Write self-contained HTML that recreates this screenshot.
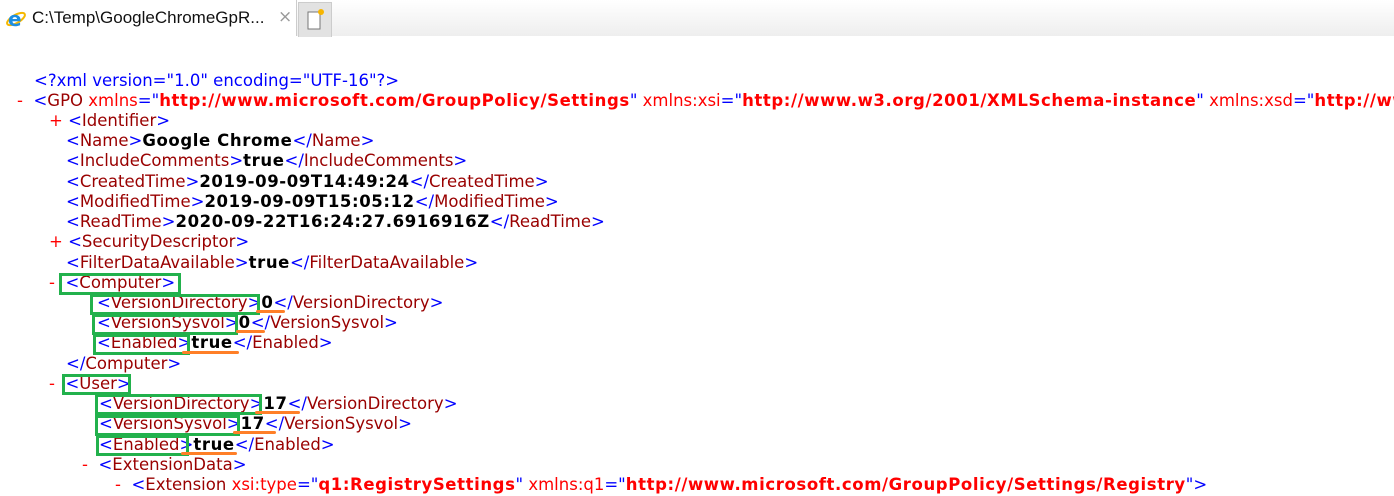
<!DOCTYPE html>
<html><head><meta charset="utf-8"><style>
body{margin:0;width:1394px;height:496px;overflow:hidden;background:#fff;position:relative;font-family:"DejaVu Sans","Liberation Sans",sans-serif;}
.bar{position:absolute;left:0;top:0;width:1394px;height:36px;background:linear-gradient(#fff,#eee);}
.tab{position:absolute;left:0;top:0;width:296px;height:36px;background:#fff;border-right:1px solid #ccc;}
.nt{position:absolute;left:298px;top:2px;width:32px;height:34px;background:#e2e2e2;border:1px solid #ccc;border-bottom:none;}
.l{position:absolute;font-size:16.5px;line-height:20px;white-space:pre;color:#0000ff;}
.wrap{position:absolute;left:0;top:0;width:1394px;height:496px;overflow:hidden;}
.t{color:#990000}.r{color:#ff0000}.rb{color:#ff0000;font-weight:bold;letter-spacing:0.6px}.b{color:#000;font-weight:bold;letter-spacing:0.6px}
.g{position:absolute;border:3px solid #22b14c;box-sizing:border-box;}
.o{position:absolute;height:3px;background:#ff7f27;border-radius:2px;}
</style></head><body>
<div class="bar"></div>
<div class="tab">
<svg style="position:absolute;left:5px;top:8px" width="22" height="22" viewBox="0 0 22 22"><ellipse cx="11" cy="11" rx="10" ry="4" fill="none" stroke="#f5b800" stroke-width="2" transform="rotate(-30 11 11)"/><text x="3" y="18" font-family="DejaVu Sans" font-size="20" font-weight="bold" fill="#1e8ee0">e</text></svg>
<div style="position:absolute;left:32px;top:8px;font-family:'Liberation Sans',sans-serif;font-size:17px;color:#111">C:\Temp\GoogleChromeGpR...</div>
<div style="position:absolute;left:278px;top:7px;font-size:17px;color:#999">×</div>
</div>
<div class="nt"><svg width="32" height="34"><rect x="9" y="9" width="12" height="17" fill="#fff" stroke="#777"/><circle cx="22" cy="9" r="3" fill="#f7b500"/></svg></div>
<div class="wrap">
<div class="l" style="left:34px;top:71px">&lt;?xml version="1.0" encoding="UTF-16"?&gt;</div>
<div class="l" style="left:17px;top:91px;width:1377px;overflow:hidden"><span class="r">-</span>  &lt;<span class="t">GPO</span> <span class="r">xmlns</span>="<span class="rb">http://www.microsoft.com/GroupPolicy/Settings</span>" <span class="r">xmlns:xsi</span>="<span class="rb">http://www.w3.org/2001/XMLSchema-instance</span>" <span class="r">xmlns:xsd</span>="<span class="rb">http://www</span></div>
<div class="l" style="left:49px;top:111px"><span class="r">+</span> &lt;<span class="t">Identifier</span>&gt;</div>
<div class="l" style="left:66px;top:131px">&lt;<span class="t">Name</span>&gt;<span class="b">Google Chrome</span>&lt;/<span class="t">Name</span>&gt;</div>
<div class="l" style="left:66px;top:151px">&lt;<span class="t">IncludeComments</span>&gt;<span class="b">true</span>&lt;/<span class="t">IncludeComments</span>&gt;</div>
<div class="l" style="left:66px;top:172px">&lt;<span class="t">CreatedTime</span>&gt;<span class="b">2019-09-09T14:49:24</span>&lt;/<span class="t">CreatedTime</span>&gt;</div>
<div class="l" style="left:66px;top:192px">&lt;<span class="t">ModifiedTime</span>&gt;<span class="b">2019-09-09T15:05:12</span>&lt;/<span class="t">ModifiedTime</span>&gt;</div>
<div class="l" style="left:66px;top:212px">&lt;<span class="t">ReadTime</span>&gt;<span class="b">2020-09-22T16:24:27.6916916Z</span>&lt;/<span class="t">ReadTime</span>&gt;</div>
<div class="l" style="left:49px;top:232px"><span class="r">+</span> &lt;<span class="t">SecurityDescriptor</span>&gt;</div>
<div class="l" style="left:66px;top:253px">&lt;<span class="t">FilterDataAvailable</span>&gt;<span class="b">true</span>&lt;/<span class="t">FilterDataAvailable</span>&gt;</div>
<div class="l" style="left:49px;top:273px"><span class="r">-</span>  &lt;<span class="t">Computer</span>&gt;</div>
<div class="l" style="left:97px;top:293px">&lt;<span class="t">VersionDirectory</span>&gt;<span class="b">0</span>&lt;/<span class="t">VersionDirectory</span>&gt;</div>
<div class="l" style="left:97px;top:313px">&lt;<span class="t">VersionSysvol</span>&gt;<span class="b">0</span>&lt;/<span class="t">VersionSysvol</span>&gt;</div>
<div class="l" style="left:97px;top:333px">&lt;<span class="t">Enabled</span>&gt;<span class="b">true</span>&lt;/<span class="t">Enabled</span>&gt;</div>
<div class="l" style="left:66px;top:354px">&lt;/<span class="t">Computer</span>&gt;</div>
<div class="l" style="left:49px;top:374px"><span class="r">-</span>  &lt;<span class="t">User</span>&gt;</div>
<div class="l" style="left:99px;top:394px">&lt;<span class="t">VersionDirectory</span>&gt;<span class="b">17</span>&lt;/<span class="t">VersionDirectory</span>&gt;</div>
<div class="l" style="left:99px;top:414px">&lt;<span class="t">VersionSysvol</span>&gt;<span class="b">17</span>&lt;/<span class="t">VersionSysvol</span>&gt;</div>
<div class="l" style="left:99px;top:435px">&lt;<span class="t">Enabled</span>&gt;<span class="b">true</span>&lt;/<span class="t">Enabled</span>&gt;</div>
<div class="l" style="left:82px;top:455px"><span class="r">-</span>  &lt;<span class="t">ExtensionData</span>&gt;</div>
<div class="l" style="left:115px;top:475px"><span class="r">-</span>  &lt;<span class="t">Extension</span> <span class="r">xsi:type</span>="<span class="rb">q1:RegistrySettings</span>" <span class="r">xmlns:q1</span>="<span class="rb">http://www.microsoft.com/GroupPolicy/Settings/Registry</span>"&gt;</div>
</div>
<div class="g" style="left:59px;top:273px;width:122px;height:22px"></div>
<div class="g" style="left:90px;top:294px;width:170px;height:21px"></div>
<div class="g" style="left:92px;top:314px;width:146px;height:21px"></div>
<div class="g" style="left:93px;top:334px;width:97px;height:21px"></div>
<div class="g" style="left:62px;top:374px;width:69px;height:21px"></div>
<div class="g" style="left:95px;top:394px;width:167px;height:21px"></div>
<div class="g" style="left:95px;top:415px;width:145px;height:21px"></div>
<div class="g" style="left:96px;top:435px;width:93px;height:21px"></div>
<div class="o" style="left:256px;top:310px;width:29px"></div>
<div class="o" style="left:236px;top:330px;width:29px"></div>
<div class="o" style="left:182px;top:351px;width:57px"></div>
<div class="o" style="left:255px;top:411px;width:45px"></div>
<div class="o" style="left:233px;top:431px;width:43px"></div>
<div class="o" style="left:181px;top:452px;width:56px"></div>
</body></html>
